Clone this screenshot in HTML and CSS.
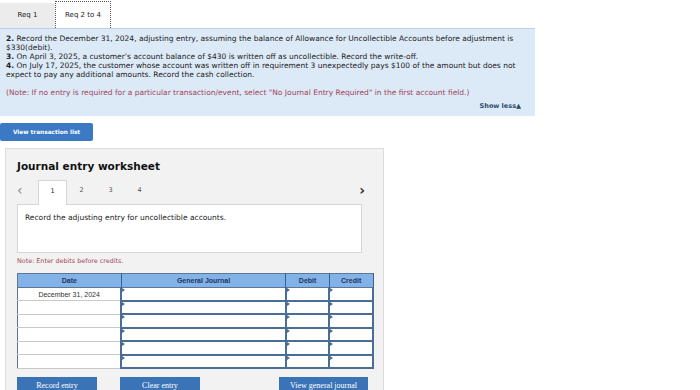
FILE: index.html
```html
<!DOCTYPE html>
<html lang="en">
<head>
    <meta charset="UTF-8">
    <meta name="viewport" content="width=device-width, initial-scale=1.0">
    <title>Journal Entry</title>
    <link rel="stylesheet" href="styles.css">
</head>
<body>
    <div class="req-tabs">
        <div class="req-tab">Req 1</div>
        <div class="req-tab active">Req 2 to 4</div>
    </div>

    <div class="question">
        <p><b>2.</b> Record the December 31, 2024, adjusting entry, assuming the balance of Allowance for Uncollectible Accounts before adjustment is $330(debit).</p>
        <p><b>3.</b> On April 3, 2025, a customer’s account balance of $430 is written off as uncollectible. Record the write-off.</p>
        <p><b>4.</b> On July 17, 2025, the customer whose account was written off in requirement 3 unexpectedly pays $100 of the amount but does not expect to pay any additional amounts. Record the cash collection.</p>
        <p class="question-note">(Note: If no entry is required for a particular transaction/event, select "No Journal Entry Required" in the first account field.)</p>
        <div class="show-less">Show less&#9650;</div>
    </div>

    <button type="button" class="btn-list">View transaction list</button>

    <div class="worksheet">
        <h2>Journal entry worksheet</h2>

        <div class="entry-nav">
            <span class="arrow prev">&lsaquo;</span>
            <span class="entry-tab active">1</span>
            <span class="entry-tab">2</span>
            <span class="entry-tab">3</span>
            <span class="entry-tab">4</span>
            <span class="arrow next">&rsaquo;</span>
        </div>

        <div class="entry-box">Record the adjusting entry for uncollectible accounts.</div>

        <div class="entry-note">Note: Enter debits before credits.</div>

        <table class="journal">
            <thead>
                <tr>
                    <th class="col-date">Date</th>
                    <th class="col-account">General Journal</th>
                    <th class="col-amt">Debit</th>
                    <th class="col-amt">Credit</th>
                </tr>
            </thead>
            <tbody>
                <tr>
                    <td class="date">December 31, 2024</td>
                    <td class="inp"></td><td class="inp"></td><td class="inp"></td>
                </tr>
                <tr>
                    <td class="date"></td>
                    <td class="inp"></td><td class="inp"></td><td class="inp"></td>
                </tr>
                <tr>
                    <td class="date"></td>
                    <td class="inp"></td><td class="inp"></td><td class="inp"></td>
                </tr>
                <tr>
                    <td class="date"></td>
                    <td class="inp"></td><td class="inp"></td><td class="inp"></td>
                </tr>
                <tr>
                    <td class="date"></td>
                    <td class="inp"></td><td class="inp"></td><td class="inp"></td>
                </tr>
                <tr>
                    <td class="date"></td>
                    <td class="inp"></td><td class="inp"></td><td class="inp"></td>
                </tr>
            </tbody>
        </table>

        <div class="actions">
            <button type="button" class="btn-action">Record entry</button>
            <button type="button" class="btn-action clear">Clear entry</button>
            <button type="button" class="btn-action view">View general journal</button>
        </div>
    </div>
</body>
</html>
```

FILE: styles.css
```css
body {
    font-family: "DejaVu Sans", Verdana, sans-serif;
    font-size: 7.5px;
    color: #222;
    margin: 0;
    padding: 0;
    background-color: #fff;
}

.req-tabs {
    display: flex;
    align-items: flex-end;
    height: 28px;
    font-size: 7px;
}

.req-tab {
    width: 55px;
    height: 25px;
    line-height: 25px;
    text-align: center;
    background-color: #ececec;
    box-sizing: border-box;
}

.req-tab.active {
    width: 56px;
    height: 27px;
    line-height: 26px;
    background-color: #fff;
    border: 1px dotted #555;
    border-bottom: none;
}

.question {
    width: 535px;
    box-sizing: border-box;
    background-color: #dce9f6;
    border-top: 1px solid #b9d0ea;
    padding: 5px 14px 5px 6px;
    line-height: 9px;
}

.question p {
    margin: 0;
}

.question-note {
    color: #a2465c;
    margin-top: 9px !important;
}

.show-less {
    text-align: right;
    font-weight: bold;
    color: #2d4a6b;
    font-size: 6.5px;
    margin-top: 5px;
}

.btn-list {
    display: block;
    margin-top: 7px;
    width: 93px;
    height: 18px;
    padding: 0;
    border: none;
    border-radius: 2px;
    background-color: #3b79c4;
    color: #fff;
    font-family: "DejaVu Sans", Verdana, sans-serif;
    font-size: 5.8px;
    font-weight: bold;
}

.worksheet {
    margin: 7px 0 0 5px;
    width: 379px;
    box-sizing: border-box;
    background-color: #f2f2f2;
    border: 1px solid #dcdcdc;
    padding: 10px 11px 10px 11px;
}

.worksheet h2 {
    margin: 0;
    font-size: 10.5px;
    line-height: 14px;
    font-weight: bold;
    color: #111;
}

.entry-nav {
    display: flex;
    align-items: flex-end;
    height: 25px;
    margin-top: 6px;
}

.arrow {
    font-size: 14px;
    line-height: 20px;
    width: 21px;
    height: 24px;
    color: #888;
}

.arrow.next {
    margin-left: auto;
    width: auto;
    margin-right: 7px;
    color: #333;
    font-weight: bold;
}

.entry-tab {
    width: 29px;
    height: 24px;
    line-height: 20px;
    text-align: center;
    box-sizing: border-box;
    color: #555;
    font-size: 6.5px;
}

.entry-tab.active {
    background-color: #fff;
    border: 1px solid #d6d6d6;
    border-bottom: none;
    height: 25px;
    margin-bottom: -1px;
    color: #222;
    position: relative;
}

.entry-box {
    width: 345px;
    height: 49px;
    box-sizing: border-box;
    background-color: #fff;
    border: 1px solid #d6d6d6;
    padding: 8px 7px;
    font-size: 7.5px;
}

.entry-note {
    margin-top: 4px;
    color: #a2465c;
    font-size: 6.4px;
}

.journal {
    margin-top: 8px;
    width: 357px;
    border-collapse: collapse;
    font-family: "Liberation Sans", Arial, sans-serif;
    font-size: 7px;
    background-color: #fff;
    border: 1px solid #5b7897;
}

.journal th {
    background-color: #82b2e7;
    color: #1c3661;
    height: 13px;
    padding: 0;
    border-right: 1px solid #3e5f86;
    border-bottom: 1px solid #5b7897;
}

.col-date { width: 104px; }
.col-account { width: 166px; }
.col-amt { width: 43px; }

.journal td {
    height: 11.5px;
    padding: 0;
}

.journal td.date {
    text-align: center;
    color: #333;
    border-bottom: 1px solid #c8c8c8;
    border-right: 1px solid #3e5f86;
}

.journal td.inp {
    position: relative;
    border: 2px solid #4a6d95;
    border-top-width: 1px;
}

.journal td.inp::before {
    content: "";
    position: absolute;
    top: 0;
    left: 0;
    border-top: 2px solid transparent;
    border-bottom: 2px solid transparent;
    border-left: 3px solid #4a6d95;
}

.actions {
    display: flex;
    margin-top: 8px;
}

.btn-action {
    width: 80px;
    height: 17px;
    padding: 0;
    border: none;
    background-color: #3a73b6;
    color: #fff;
    font-family: "Liberation Serif", "Times New Roman", serif;
    font-size: 8px;
}

.btn-action.clear {
    margin-left: 23px;
}

.btn-action.view {
    width: 89px;
    margin-left: auto;
    margin-right: 4px;
}
```
